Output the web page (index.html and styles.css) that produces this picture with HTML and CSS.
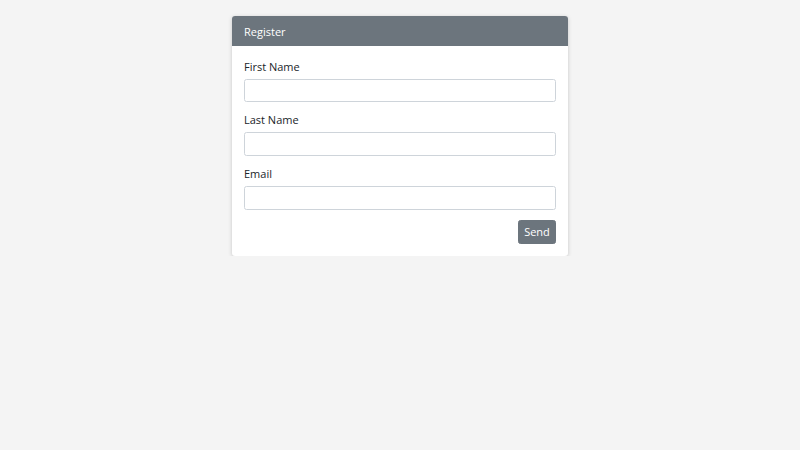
FILE: index.html
```html
<!DOCTYPE html>
<html>
<head>
<meta charset="utf-8">
<link rel="stylesheet" href="styles.css">
</head>
<body>
<div class="page">
  <div class="card">
    <div class="card-header">Register</div>
    <form class="card-body">
      <div class="group">
        <label class="label">First Name</label>
        <input class="input" type="text">
      </div>
      <div class="group">
        <label class="label">Last Name</label>
        <input class="input" type="text">
      </div>
      <div class="group">
        <label class="label">Email</label>
        <input class="input" type="text">
      </div>
      <div class="actions">
        <button class="btn" type="button">Send</button>
      </div>
    </form>
  </div>
</div>
</body>
</html>
```
FILE: styles.css
```css
html, body {
  margin: 0;
  padding: 0;
  background: #f4f4f4;
  font-family: "Open Sans", "Noto Sans", sans-serif;
  font-size: 11px;
  line-height: 15px;
  color: #212529;
}
.page {
  display: flex;
  justify-content: center;
  padding-top: 16px;
}
.card {
  width: 336px;
  background: #fff;
  border-radius: 3px;
  box-shadow: 0 1px 4px rgba(0,0,0,0.18);
  overflow: hidden;
}
.card-header {
  background: #6c757d;
  color: #fff;
  padding: 7.5px 12px;
}
.card-body {
  margin: 0;
  padding: 12.5px 12px 12px;
  display: flex;
  flex-direction: column;
}
.group {
  display: flex;
  flex-direction: column;
  margin-bottom: 10px;
}
.label {
  margin-bottom: 5px;
}
.input {
  height: 23.75px;
  box-sizing: border-box;
  border: 1px solid #ced4da;
  border-radius: 2.5px;
  margin: 0;
  padding: 0 7.5px;
  font-family: inherit;
  font-size: 10px;
}
.actions {
  display: flex;
  justify-content: flex-end;
}
.btn {
  background: #6c757d;
  color: #fff;
  border: 1px solid #6c757d;
  border-radius: 2.5px;
  width: 38px;
  height: 23.75px;
  padding: 0;
  font-family: inherit;
  font-size: 11px;
  line-height: 15px;
}
```
